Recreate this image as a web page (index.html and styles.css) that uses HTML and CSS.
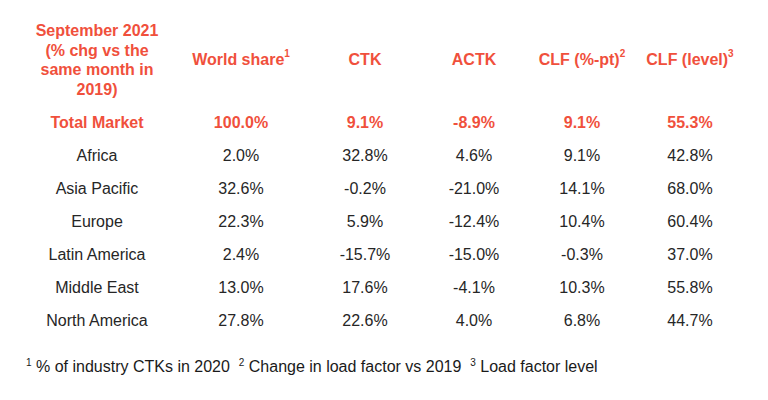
FILE: index.html
```html
<!DOCTYPE html>
<html>
<head>
<meta charset="utf-8">
<link rel="stylesheet" href="styles.css">
</head>
<body>
<div class="page">
  <table class="stats">
    <colgroup>
      <col class="c1"><col class="c2"><col class="c3"><col class="c4"><col class="c5"><col class="c6">
    </colgroup>
    <thead>
      <tr class="head">
        <th>September 2021<br>(% chg vs the<br>same month in<br>2019)</th>
        <th>World share<sup>1</sup></th>
        <th>CTK</th>
        <th>ACTK</th>
        <th>CLF (%-pt)<sup>2</sup></th>
        <th>CLF (level)<sup>3</sup></th>
      </tr>
    </thead>
    <tbody>
      <tr class="total"><td>Total Market</td><td>100.0%</td><td>9.1%</td><td>-8.9%</td><td>9.1%</td><td>55.3%</td></tr>
      <tr><td>Africa</td><td>2.0%</td><td>32.8%</td><td>4.6%</td><td>9.1%</td><td>42.8%</td></tr>
      <tr><td>Asia Pacific</td><td>32.6%</td><td>-0.2%</td><td>-21.0%</td><td>14.1%</td><td>68.0%</td></tr>
      <tr><td>Europe</td><td>22.3%</td><td>5.9%</td><td>-12.4%</td><td>10.4%</td><td>60.4%</td></tr>
      <tr><td>Latin America</td><td>2.4%</td><td>-15.7%</td><td>-15.0%</td><td>-0.3%</td><td>37.0%</td></tr>
      <tr><td>Middle East</td><td>13.0%</td><td>17.6%</td><td>-4.1%</td><td>10.3%</td><td>55.8%</td></tr>
      <tr><td>North America</td><td>27.8%</td><td>22.6%</td><td>4.0%</td><td>6.8%</td><td>44.7%</td></tr>
    </tbody>
  </table>
  <p class="notes"><sup>1</sup> % of industry CTKs in 2020&nbsp; <sup>2</sup> Change in load factor vs 2019&nbsp; <sup>3</sup> Load factor level</p>
</div>
</body>
</html>
```

FILE: styles.css
```css
html, body {
  margin: 0;
  padding: 0;
  background: #ffffff;
}
body {
  font-family: "Liberation Sans", Arial, sans-serif;
  color: #262626;
}
.page {
  width: 768px;
  height: 400px;
  padding: 21px 0 0 22px;
  box-sizing: border-box;
  overflow: hidden;
}
.stats {
  border-collapse: collapse;
  table-layout: fixed;
  width: 722px;
}
.c1 { width: 150px; }
.c2 { width: 138px; }
.c3 { width: 110px; }
.c4 { width: 108px; }
.c5 { width: 108px; }
.c6 { width: 108px; }
.stats th,
.stats td {
  padding: 0;
  text-align: center;
  font-size: 16px;
}
.head th {
  height: 78px;
  padding-bottom: 7px;
  vertical-align: middle;
  color: #f0503c;
  font-weight: bold;
  line-height: 19.5px;
}
.head sup,
.notes sup {
  font-size: 10px;
  font-weight: normal;
  vertical-align: top;
  position: relative;
  line-height: 10px;
}
.head sup { font-weight: bold; top: -1px; }
.stats tbody td {
  height: 33px;
  line-height: 18px;
  vertical-align: middle;
}
.total td {
  color: #f0503c;
  font-weight: bold;
}
.notes {
  margin: 21px 0 0 4px;
  font-size: 16px;
  line-height: 18px;
  color: #1a1a1a;
}
.notes sup { top: 0px; }
```
